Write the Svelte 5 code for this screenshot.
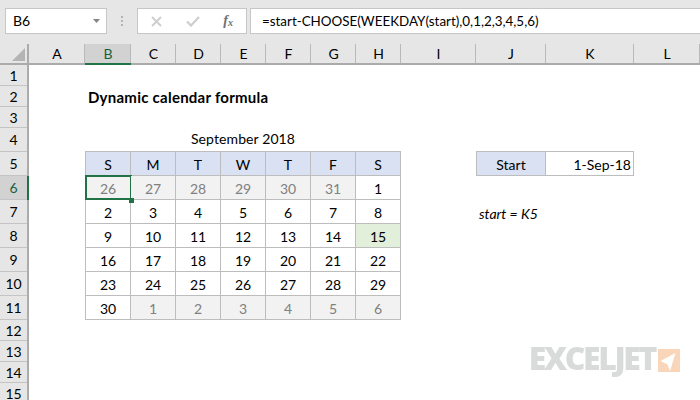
<script>
  const columns = ['A', 'B', 'C', 'D', 'E', 'F', 'G', 'H', 'I', 'J', 'K', 'L'];
  const rows = [1, 2, 3, 4, 5, 6, 7, 8, 9, 10, 11, 12, 13, 14, 15];

  const days = ['S', 'M', 'T', 'W', 'T', 'F', 'S'];
  const dates = [
    [26, 27, 28, 29, 30, 31, 1],
    [2, 3, 4, 5, 6, 7, 8],
    [9, 10, 11, 12, 13, 14, 15],
    [16, 17, 18, 19, 20, 21, 22],
    [23, 24, 25, 26, 27, 28, 29],
    [30, 1, 2, 3, 4, 5, 6]
  ];

  // days that fall outside September are greyed out
  function outside(week, day) {
    return (week === 0 && day < 6) || (week === 5 && day > 0);
  }
</script>

<div class="app">
  <div class="toolbar">
    <div class="name-box">
      <span>B6</span>
      <svg class="caret" viewBox="0 0 7 4" width="7" height="4" aria-hidden="true"><path d="M0 0H7L3.500 4Z" fill="#848484"/></svg>
    </div>
    <div class="grip"><i></i><i></i><i></i></div>
    <div class="fx-box">
      <svg viewBox="0 0 11 11" width="11" height="11" aria-hidden="true"><path d="M1 1L10 10M10 1L1 10" stroke="#cdcdcd" stroke-width="1.800" fill="none"/></svg>
      <svg viewBox="0 0 14 11" width="14" height="11" aria-hidden="true"><path d="M1 5.500L5 9.500L13 1" stroke="#cdcdcd" stroke-width="2.200" fill="none"/></svg>
      <span class="fx">f<sub>x</sub></span>
    </div>
    <div class="formula">=start-CHOOSE(WEEKDAY(start),0,1,2,3,4,5,6)</div>
  </div>

  <div class="sheet">
    <div class="corner"><svg viewBox="0 0 13 13" width="13" height="13" aria-hidden="true"><path d="M13 0V13H0Z" fill="#b4b4b4"/></svg></div>
    {#each columns as col}
      <div class="col-head" class:active={col === 'B'}>{col}</div>
    {/each}

    {#each rows as row}
      <div class="row-head" class:active={row === 6} style="grid-row:{row + 1}">{row}</div>
    {/each}

    <div class="title">Dynamic calendar formula</div>
    <div class="month">September 2018</div>

    {#each days as day, d}
      <div class="cell head" class:first={d === 0} style="grid-row:6;grid-column:{d + 3}">{day}</div>
    {/each}

    {#each dates as week, w}
      {#each week as date, d}
        <div
          class="cell"
          class:first={d === 0}
          class:muted={outside(w, d)}
          class:hit={date === 15}
          class:selected={w === 0 && d === 0}
          style="grid-row:{w + 7};grid-column:{d + 3}"
        >{date}</div>
      {/each}
    {/each}

    <div class="cell head first input-label">Start</div>
    <div class="cell top input-value">1-Sep-18</div>
    <div class="note">start = K5</div>

    <div class="logo">
      <span class="logo-text">EXCELJET</span>
      <svg viewBox="0 0 22 23" width="22" height="23" aria-hidden="true">
        <rect width="22" height="23" fill="#f9d6ba"/>
        <path d="M2.500 12L17.500 4L12 22L9.500 15.500Z" fill="#fff"/>
      </svg>
    </div>
  </div>
</div>

<style>
:global(body) { margin: 0; background: #fff; }

.app {
  width: 700px; height: 400px;
  overflow: hidden;
  font-family: "Lato", "Liberation Sans", sans-serif;
  font-size: 14px;
  line-height: 14px;
  color: #000;
  background: #fff;
}

.toolbar {
  height: 44px;
  box-sizing: border-box;
  padding: 8px 0 10px 5px;
  background: #e6e6e6;
  display: flex;
}
.name-box {
  width: 102px;
  box-sizing: border-box;
  padding: 0 6px 0 7px;
  background: #fff;
  border: 1px solid #c6c6c6;
  display: flex; align-items: center; justify-content: space-between;
}
.grip {
  width: 30px;
  display: flex; flex-direction: column; align-items: center; justify-content: center;
  gap: 2px;
}
.grip i { width: 2px; height: 2px; background: #b4b4b4; }
.fx-box {
  width: 110px;
  box-sizing: border-box;
  padding: 0 13px;
  background: #fff;
  border: 1px solid #c6c6c6;
  display: flex; align-items: center; justify-content: space-between;
}
.fx {
  font-family: "Liberation Serif", serif;
  font-style: italic; font-weight: 700;
  font-size: 14px;
  color: #707070;
}
.fx sub { font-size: 10px; vertical-align: -1px; line-height: 0; }
.formula {
  flex: 1;
  margin-left: 3px;
  box-sizing: border-box;
  padding-left: 11px;
  font-size: 13.400px;
  background: #fff;
  border: 1px solid #c6c6c6;
  border-right: 0;
  display: flex; align-items: center;
}

.sheet {
  position: relative;
  display: grid;
  grid-template-columns: 29px 56px 46px 45px 45px 45px 45px 45px 45px 75px 70px 88px 66px;
  grid-template-rows: 21px 21px 21px 21px 24px 24px 24px 24px 24px 24px 24px 24px 21px 21px 21px 21px;
}

.corner, .col-head {
  grid-row: 1;
  background: #e6e6e6;
  border-bottom: 2px solid #ababab;
  box-sizing: border-box;
}
.corner {
  grid-column: 1;
  border-right: 2px solid #ababab;
  display: flex; align-items: flex-end; justify-content: flex-end;
  padding: 0 2px 2px 0;
}
.col-head {
  display: flex; align-items: center; justify-content: center;
  box-shadow: inset -1px 0 0 #b9b9b9;
}
.col-head.active {
  background: #d2d2d2;
  border-bottom-color: #217346;
  color: #17613a;
}

.row-head {
  grid-column: 1;
  background: #e6e6e6;
  border-right: 2px solid #ababab;
  box-sizing: border-box;
  display: flex; align-items: center; justify-content: center;
  box-shadow: inset 0 -1px 0 #c4c4c4;
}
.row-head.active {
  background: #d2d2d2;
  border-right-color: #217346;
  color: #17613a;
}

.title {
  grid-row: 3; grid-column: 3 / 8;
  padding-left: 3px;
  font-size: 15px;
  letter-spacing: 0.250px;
  font-weight: 700;
  white-space: nowrap;
  display: flex; align-items: center;
}
.month {
  grid-row: 5; grid-column: 3 / 10;
  padding-bottom: 2px;
  letter-spacing: 0.100px;
  display: flex; align-items: center; justify-content: center;
}

.cell {
  position: relative;
  box-sizing: border-box;
  padding-top: 2px;
  border-right: 1px solid #bdbdbd;
  border-bottom: 1px solid #bdbdbd;
  display: flex; align-items: center; justify-content: center;
}
.cell.first { border-left: 1px solid #bdbdbd; }
/* top line sits on the last pixel of the row above */
.cell.head, .cell.top { border-top: 1px solid #bdbdbd; margin-top: -1px; }
.cell.head { background: #d9e1f2; }
.cell.muted { background: #f2f2f2; color: #808080; }
.cell.hit { background: #e2efda; }
.cell.selected::after {
  content: "";
  position: absolute; inset: -1px -2px -1px -1px;
  border: 2px solid #217346;
}
.cell.selected::before {
  content: "";
  position: absolute; z-index: 1;
  right: -4px; bottom: -4px;
  width: 5px; height: 5px;
  background: #217346;
}

.input-label { grid-row: 6; grid-column: 11; }
.input-value {
  grid-row: 6; grid-column: 12;
  justify-content: flex-end;
  padding-right: 2px;
}
.note {
  grid-row: 8; grid-column: 11 / 13;
  padding: 3px 0 0 3px;
  font-style: italic;
  display: flex; align-items: center;
}

.logo {
  position: absolute;
  right: 20px; bottom: 32px;
  display: flex; align-items: flex-start; gap: 3px;
  filter: blur(0.400px);
}
.logo-text {
  margin-top: -3px;
  font-family: "Open Sans", "Liberation Sans", sans-serif;
  font-weight: 800;
  font-size: 32px;
  line-height: 23px;
  letter-spacing: -2.400px;
  color: #d9dada;
}
</style>
